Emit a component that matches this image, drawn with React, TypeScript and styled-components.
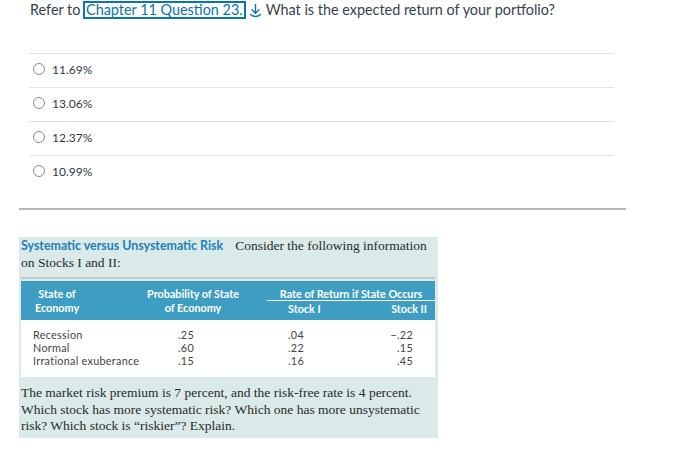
import styled, { createGlobalStyle } from "styled-components"

const GlobalStyle = createGlobalStyle`
body {
  margin: 0;
  background: #ffffff;
  font-family: Lato, "Open Sans", sans-serif;
  color: #2d3b45;
}
`

const answers = ["11.69%", "13.06%", "12.37%", "10.99%"]

const rows = [
  { state: "Recession", prob: ".25", one: ".04", two: "\u2212.22" },
  { state: "Normal", prob: ".60", one: ".22", two: ".15" },
  { state: "Irrational exuberance", prob: ".15", one: ".16", two: ".45" },
]

const DownloadIcon = () => (
  <svg width="13" height="15" viewBox="0 0 13 15" fill="none" stroke="#0b74ad" strokeWidth="1.4" strokeLinecap="round">
    <path d="M6.5 1.5 V10" />
    <path d="M3 6.8 L6.5 10.3 L10 6.8" />
    <path d="M1.5 11.5 Q6.5 15.5 11.5 11.5" />
  </svg>
)

const App = () => {
  return (
    <Page>
      <GlobalStyle />
      <Question>
        Refer to <ChapterLink>Chapter 11 Question 23.</ChapterLink>
        <IconWrap><DownloadIcon /></IconWrap>
        What is the expected return of your portfolio?
      </Question>

      <AnswerList>
        {answers.map((a) => (
          <Answer key={a}>
            <Radio />
            {a}
          </Answer>
        ))}
      </AnswerList>

      <Divider />

      <Problem>
        <Intro>
          <ProblemTitle>Systematic versus Unsystematic Risk</ProblemTitle>
          Consider the following information<br />
          on Stocks I and II:
        </Intro>
        <Rule />
        <Table>
          <HeadRow>
            <HeadCell $width={72} $gap={0}>State of<br />Economy</HeadCell>
            <HeadCell $width={106} $gap={47}>Probability of State<br />of Economy</HeadCell>
            <ReturnGroup>
              <GroupTitle>Rate of Return if State Occurs</GroupTitle>
              <StockHeads>
                <span>Stock I</span>
                <span>Stock II</span>
              </StockHeads>
            </ReturnGroup>
          </HeadRow>
          <Body>
            {rows.map((r) => (
              <BodyRow key={r.state}>
                <StateCell>{r.state}</StateCell>
                <ProbCell>{r.prob}</ProbCell>
                <StockOneCell>{r.one}</StockOneCell>
                <StockTwoCell>{r.two}</StockTwoCell>
              </BodyRow>
            ))}
          </Body>
        </Table>
        <Closing>
          The market risk premium is 7 percent, and the risk-free rate is 4 percent.
          Which stock has more systematic risk? Which one has more unsystematic
          risk? Which stock is &ldquo;riskier&rdquo;? Explain.
        </Closing>
      </Problem>
    </Page>
  )
}

const Page = styled.div`
width: 700px;
height: 460px;
overflow: hidden;
`

const Question = styled.p`
margin: 0;
padding: 0 0 0 30px;
height: 20px;
font-size: 14.4px;
line-height: 20px;
display: flex;
align-items: center;
white-space: pre;
color: #36434d;
`

const ChapterLink = styled.span`
color: #0b74ad;
border: 2px solid #0b74ad;
padding: 0 1px;
margin-left: -1px;
line-height: 14px;
`

const IconWrap = styled.span`
display: inline-flex;
margin: 0 4px 0 3px;
`

const AnswerList = styled.div`
margin: 33px 0 0 29px;
width: 585px;
`

const Answer = styled.div`
display: flex;
align-items: center;
height: 34px;
box-sizing: border-box;
padding-bottom: 3px;
border-top: 1px solid #e3e3e3;
font-size: 12px;
color: #2d3b45;
`

const Radio = styled.span`
width: 12px;
height: 12px;
border: 1px solid #8b8b8b;
border-radius: 50%;
margin: 0 7px 0 4px;
box-sizing: border-box;
`

const Divider = styled.div`
margin: 19px 0 0 19px;
width: 607px;
height: 2px;
background: #b8b8b8;
`

const Problem = styled.div`
margin: 27px 0 0 19px;
width: 419px;
background: #d9eae9;
padding: 0 3px 3px 2px;
box-sizing: border-box;
`

const Intro = styled.p`
margin: 0;
font-family: "Liberation Serif", serif;
font-size: 13.5px;
line-height: 17px;
color: #2a2a2a;
white-space: nowrap;
`

const ProblemTitle = styled.span`
font-family: Lato, sans-serif;
font-weight: 700;
font-size: 12.4px;
color: #1f80b9;
margin-right: 12px;
`

const Rule = styled.div`
height: 2px;
background: #bfc9c9;
margin: 6px 0 2px;
`

const Table = styled.div`
background: #ffffff;
font-family: Lato, "Open Sans", sans-serif;
`

const HeadRow = styled.div`
display: flex;
background: #3d9dc2;
color: #ffffff;
font-weight: 700;
font-size: 10.8px;
height: 39px;
`

const HeadCell = styled.div<{ $width: number; $gap: number }>`
width: ${(p) => p.$width}px;
margin-left: ${(p) => p.$gap}px;
text-align: center;
white-space: nowrap;
padding-top: 6px;
line-height: 14px;
`

const ReturnGroup = styled.div`
flex: 1;
margin-left: 21px;
padding-top: 6px;
`

const GroupTitle = styled.div`
text-align: center;
line-height: 13px;
border-bottom: 1px solid #ffffff;
`

const StockHeads = styled.div`
display: flex;
justify-content: space-between;
line-height: 13px;
padding: 1px 8px 0 21px;
`

const Body = styled.div`
padding: 8px 0 10px;
color: #444444;
font-size: 10.8px;
letter-spacing: 0.3px;
`

const BodyRow = styled.div`
display: flex;
line-height: 13px;
`

const StateCell = styled.div`
width: 145px;
padding-left: 12px;
`

const ProbCell = styled.div`
width: 110px;
`

const StockOneCell = styled.div`
width: 60px;
`

const StockTwoCell = styled.div`
width: 65px;
text-align: right;
`

const Closing = styled.p`
margin: 8px 0 0;
font-family: "Liberation Serif", serif;
font-size: 13.5px;
line-height: 16.5px;
color: #2a2a2a;
`

export default App
